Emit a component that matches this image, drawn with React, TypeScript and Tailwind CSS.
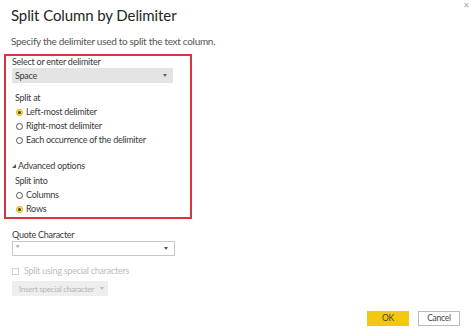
import React from "react";

function Radio({ checked, label }: { checked?: boolean; label: string }) {
  return <div className="flex h-[14px] items-center gap-[3px] pl-[4px]">
    <span className={`flex h-[7px] w-[7px] items-center justify-center rounded-full border ${checked ? "border-[#d9b200] bg-[#f6df6a]" : "border-[#555] bg-white"}`}>
      {checked && <span className="h-[3px] w-[3px] rounded-full bg-[#4a4020]" />}
    </span>
    <span>{label}</span>
  </div>;
}

function Caret({ color = "#666" }: { color?: string }) {
  return <svg width="4" height="3" viewBox="0 0 4 3"><path d="M0 0h4L2 3z" fill={color} /></svg>;
}

export default function App() {
  return <div className="relative h-[336px] w-[474px] overflow-hidden bg-white text-[9px] tracking-[-0.25px] text-[#3a3a3a]" style={{ fontFamily: "Lato, 'Open Sans', sans-serif" }}>
    <span className="absolute right-[4px] top-[1px] text-[8px] leading-[8px] text-[#aaa]">✕</span>
    <div className="px-[11px] pt-[5px]">
      <h1 className="text-[15px] leading-[20px] tracking-[-0.1px] text-[#252423]">Split Column by Delimiter</h1>
      <p className="mt-[9px] text-[10px] leading-[14px] tracking-[-0.3px] text-[#555]">Specify the delimiter used to split the text column.</p>
    </div>

    <div className="ml-[4px] mt-[6px] w-[188px] border-2 border-[#d9343f] pb-[1px] pl-[6px]">
      <p className="leading-[12px]">Select or enter delimiter</p>
      <div className="flex h-[15px] w-[161px] items-center justify-between bg-[#e4e4e4] pl-[3px] pr-[6px]">
        <span>Space</span>
        <Caret />
      </div>
      <p className="ml-[3px] mt-[9px] leading-[12px]">Split at</p>
      <div className="mt-[1px]">
        <Radio checked label="Left-most delimiter" />
        <Radio label="Right-most delimiter" />
        <Radio label="Each occurrence of the delimiter" />
      </div>
      <div className="mt-[12px] flex h-[14px] items-center gap-[2px]">
        <svg width="4" height="4" viewBox="0 0 4 4"><path d="M4 0v4H0z" fill="#555" /></svg>
        <span>Advanced options</span>
      </div>
      <p className="ml-[3px] mt-[1px] leading-[14px]">Split into</p>
      <Radio label="Columns" />
      <Radio checked label="Rows" />
    </div>

    <div className="px-[12px] pt-[10px]">
      <p className="leading-[12px]">Quote Character</p>
      <div className="flex h-[15px] w-[163px] items-center justify-between border border-[#c8c8c8] pl-[3px] pr-[6px]">
        <span className="text-[#777]">"</span>
        <Caret color="#555" />
      </div>
      <div className="mt-[8px] flex h-[14px] items-center gap-[5px] text-[#bdbdbd]">
        <span className="h-[7px] w-[7px] border border-[#d4d4d4]" />
        <span>Split using special characters</span>
      </div>
      <div className="mt-[3px] flex h-[15px] w-[96px] items-center gap-[6px] whitespace-nowrap bg-[#eeeeee] pl-[7px] text-[8px] text-[#b5b5b5]">
        <span>Insert special character</span>
        <Caret color="#bbb" />
      </div>
    </div>

    <div className="absolute bottom-[10px] right-[14px] flex gap-[9px] text-[8.5px]">
      <button className="h-[15px] w-[42px] bg-[#f2c811] text-[#444]">OK</button>
      <button className="h-[15px] w-[42px] border border-[#bbb] bg-white text-[#444]">Cancel</button>
    </div>
  </div>;
}
